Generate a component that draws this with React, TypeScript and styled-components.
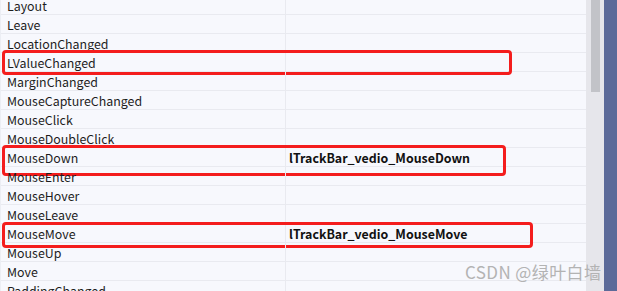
import React from "react";
import styled, { createGlobalStyle } from "styled-components";

const GlobalStyle = createGlobalStyle`
  html, body {
    margin: 0;
    padding: 0;
    overflow: hidden;
  }
  body {
    font-family: "Noto Sans CJK SC", "Noto Sans", sans-serif;
  }
`;

const Screen = styled.div`
  display: flex;
  width: 617px;
  height: 291px;
  overflow: hidden;
  position: relative;
  background: #f7f8fd;
`;

const Grid = styled.div`
  flex: 0 0 586px;
  display: flex;
  flex-direction: column;
  margin-top: -4px;
  border-left: 1px solid #eceef4;
  box-sizing: border-box;
`;

const Row = styled.div`
  position: relative;
  flex: 0 0 19px;
  height: 19px;
  min-height: 0;
  display: grid;
  grid-template-columns: 285px 1fr;
  border-bottom: 1px solid #e9eaf0;
  box-sizing: border-box;
`;

const NameCell = styled.div`
  padding: 2px 0 0 6px;
  font-size: 12.4px;
  line-height: 16px;
  color: #1e1e1e;
  border-right: 1px solid #e9eaf0;
  white-space: nowrap;
`;

const HandlerCell = styled.div`
  padding: 2px 0 0 3px;
  font-size: 12.4px;
  line-height: 16px;
  font-weight: bold;
  color: #111;
  white-space: nowrap;
`;

const Mark = styled.div<{ $w: number; $top: number; $h: number }>`
  position: absolute;
  left: 1px;
  top: ${(p) => p.$top}px;
  width: ${(p) => p.$w}px;
  height: ${(p) => p.$h}px;
  border: 3px solid #f41d1d;
  border-radius: 4px;
  box-sizing: border-box;
  pointer-events: none;
`;

const Track = styled.div`
  flex: 0 0 18px;
  background: #e6e6eb;
  display: flex;
  justify-content: center;
`;

const Thumb = styled.div`
  width: 9px;
  height: 92px;
  background: #c2c3c8;
`;

const SidePanel = styled.div`
  flex: 1;
  background: #5c6a99;
`;

const Watermark = styled.div`
  position: absolute;
  left: 465px;
  top: 261px;
  font-family: "Noto Sans CJK SC", "Noto Sans", sans-serif;
  font-size: 17px;
  line-height: 22px;
  color: #b3b3b3;
  letter-spacing: 0.4px;
  white-space: nowrap;
`;

type Ev = {
  name: string;
  handler?: string;
  mark?: { w: number; top: number; h: number };
};

const events: Ev[] = [
  { name: "Layout" },
  { name: "Leave" },
  { name: "LocationChanged" },
  { name: "LValueChanged", mark: { w: 510, top: -3, h: 25 } },
  { name: "MarginChanged" },
  { name: "MouseCaptureChanged" },
  { name: "MouseClick" },
  { name: "MouseDoubleClick" },
  {
    name: "MouseDown",
    handler: "lTrackBar_vedio_MouseDown",
    mark: { w: 504, top: -3, h: 31 },
  },
  { name: "MouseEnter" },
  { name: "MouseHover" },
  { name: "MouseLeave" },
  {
    name: "MouseMove",
    handler: "lTrackBar_vedio_MouseMove",
    mark: { w: 531, top: -2, h: 26 },
  },
  { name: "MouseUp" },
  { name: "Move" },
  { name: "PaddingChanged" },
];

const App: React.FC = () => {
  return (
    <>
      <GlobalStyle />
      <Screen>
        <Grid>
          {events.map((ev) => (
            <Row key={ev.name}>
              <NameCell>{ev.name}</NameCell>
              <HandlerCell>{ev.handler}</HandlerCell>
              {ev.mark && (
                <Mark $w={ev.mark.w} $top={ev.mark.top} $h={ev.mark.h} />
              )}
            </Row>
          ))}
        </Grid>
        <Track>
          <Thumb />
        </Track>
        <SidePanel />
        <Watermark>CSDN @绿叶白墙</Watermark>
      </Screen>
    </>
  );
};

export default App;
